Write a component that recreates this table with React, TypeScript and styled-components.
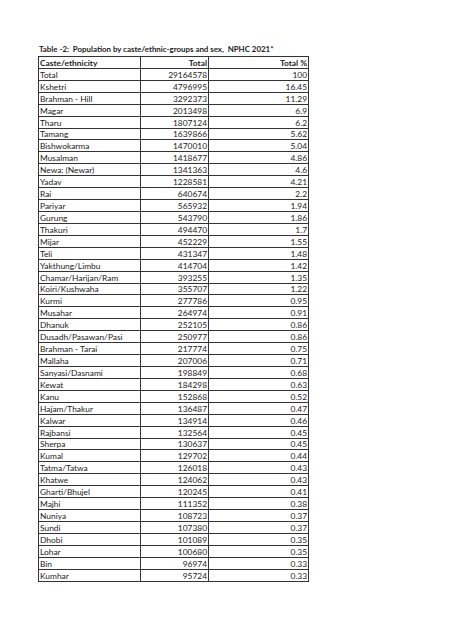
import React from "react";
import styled, { createGlobalStyle } from "styled-components";

const GlobalStyle = createGlobalStyle`
  html, body {
    margin: 0;
    padding: 0;
    background: #ffffff;
  }
  body {
    font-family: Lato, "Liberation Sans", sans-serif;
    color: #222222;
  }
`;

const Page = styled.div`
  width: 474px;
  height: 632px;
  padding: 42px 0 0 38px;
  box-sizing: border-box;
`;

const Title = styled.div`
  font-size: 7.9px;
  font-weight: 700;
  line-height: 14px;
  padding-left: 1px;
  white-space: pre;
`;

const Table = styled.table`
  border-collapse: collapse;
  table-layout: fixed;
  width: 270px;
  font-size: 8.4px;
`;

const Row = styled.tr`
  height: 11.93px;
`;

const Cell = styled.td<{ $align?: "left" | "right"; $bold?: boolean }>`
  border: 1px solid #333333;
  padding: 0 1px;
  line-height: 10px;
  vertical-align: bottom;
  text-align: ${(p) => p.$align ?? "left"};
  font-weight: ${(p) => (p.$bold ? 700 : 400)};
  white-space: nowrap;
  overflow: hidden;
`;

type Entry = [string, string, string];

const rows: Entry[] = [
  ["Total", "29164578", "100"],
  ["Kshetri", "4796995", "16.45"],
  ["Brahman - Hill", "3292373", "11.29"],
  ["Magar", "2013498", "6.9"],
  ["Tharu", "1807124", "6.2"],
  ["Tamang", "1639866", "5.62"],
  ["Bishwokarma", "1470010", "5.04"],
  ["Musalman", "1418677", "4.86"],
  ["Newa: (Newar)", "1341363", "4.6"],
  ["Yadav", "1228581", "4.21"],
  ["Rai", "640674", "2.2"],
  ["Pariyar", "565932", "1.94"],
  ["Gurung", "543790", "1.86"],
  ["Thakuri", "494470", "1.7"],
  ["Mijar", "452229", "1.55"],
  ["Teli", "431347", "1.48"],
  ["Yakthung/Limbu", "414704", "1.42"],
  ["Chamar/Harijan/Ram", "393255", "1.35"],
  ["Koiri/Kushwaha", "355707", "1.22"],
  ["Kurmi", "277786", "0.95"],
  ["Musahar", "264974", "0.91"],
  ["Dhanuk", "252105", "0.86"],
  ["Dusadh/Pasawan/Pasi", "250977", "0.86"],
  ["Brahman - Tarai", "217774", "0.75"],
  ["Mallaha", "207006", "0.71"],
  ["Sanyasi/Dasnami", "198849", "0.68"],
  ["Kewat", "184298", "0.63"],
  ["Kanu", "152868", "0.52"],
  ["Hajam/Thakur", "136487", "0.47"],
  ["Kalwar", "134914", "0.46"],
  ["Rajbansi", "132564", "0.45"],
  ["Sherpa", "130637", "0.45"],
  ["Kumal", "129702", "0.44"],
  ["Tatma/Tatwa", "126018", "0.43"],
  ["Khatwe", "124062", "0.43"],
  ["Gharti/Bhujel", "120245", "0.41"],
  ["Majhi", "111352", "0.38"],
  ["Nuniya", "108723", "0.37"],
  ["Sundi", "107380", "0.37"],
  ["Dhobi", "101089", "0.35"],
  ["Lohar", "100680", "0.35"],
  ["Bin", "96974", "0.33"],
  ["Kumhar", "95724", "0.33"],
];

const App: React.FC = () => {
  return (
    <>
      <GlobalStyle />
      <Page>
        <Title>{"Table -2:  Population by caste/ethnic-groups and sex,  NPHC 2021*"}</Title>
        <Table>
          <colgroup>
            <col style={{ width: 102 }} />
            <col style={{ width: 68 }} />
            <col style={{ width: 100 }} />
          </colgroup>
          <tbody>
            <Row>
              <Cell $bold>Caste/ethnicity</Cell>
              <Cell $bold $align="right">Total</Cell>
              <Cell $bold $align="right">Total %</Cell>
            </Row>
            {rows.map(([name, total, pct]) => (
              <Row key={name}>
                <Cell>{name}</Cell>
                <Cell $align="right">{total}</Cell>
                <Cell $align="right">{pct}</Cell>
              </Row>
            ))}
          </tbody>
        </Table>
      </Page>
    </>
  );
};

export default App;
